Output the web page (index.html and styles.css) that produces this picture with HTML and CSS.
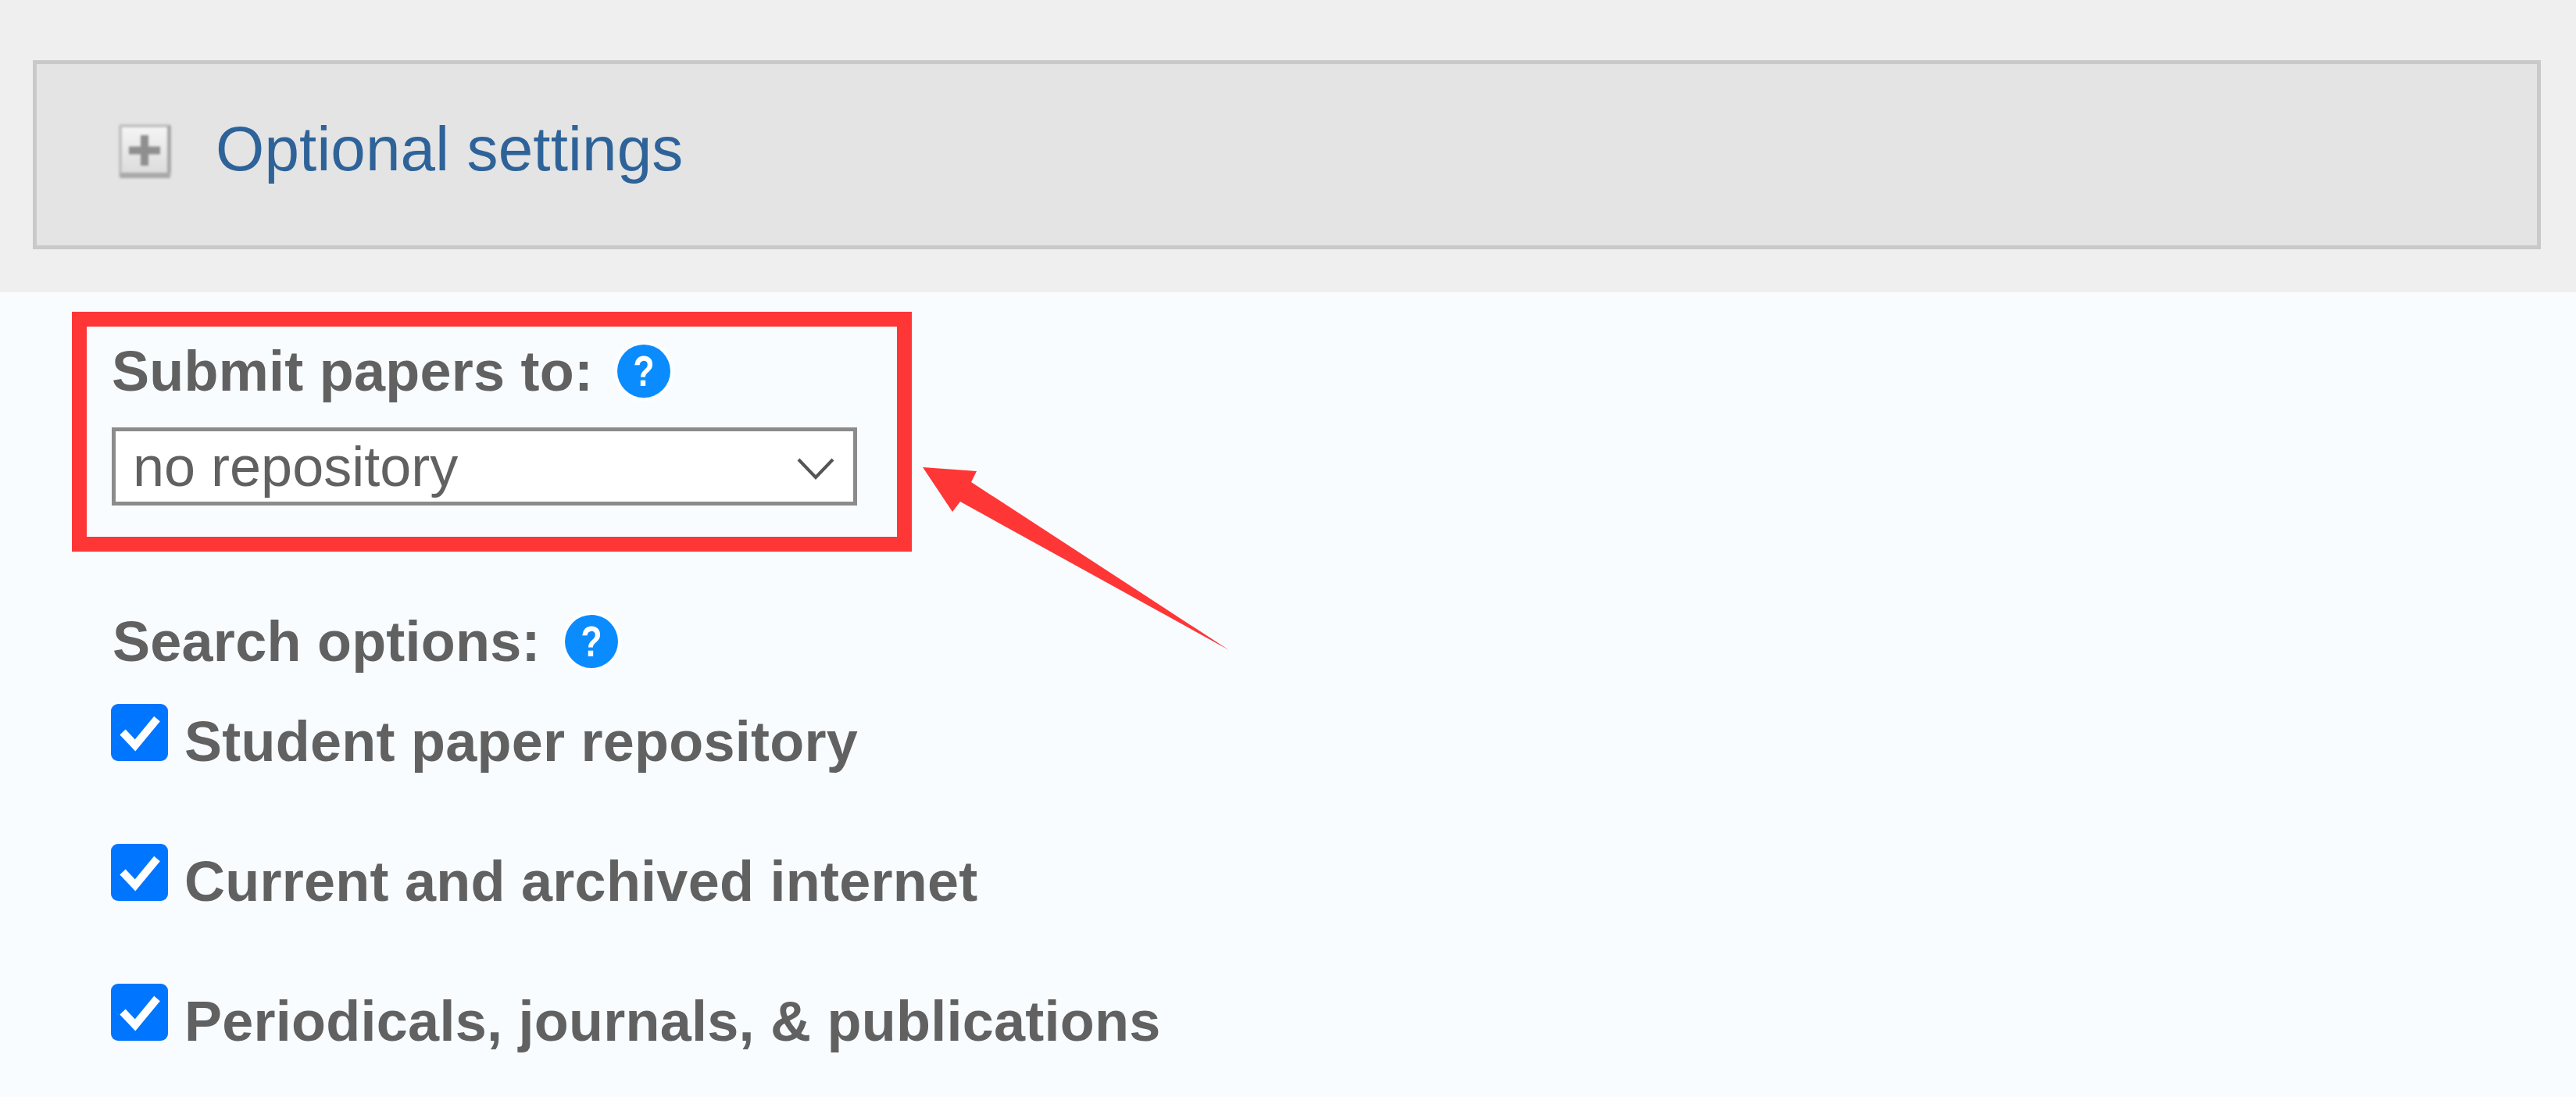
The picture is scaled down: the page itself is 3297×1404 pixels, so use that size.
FILE: index.html
```html
<!DOCTYPE html>
<html>
<head lang="en">
    <meta charset="UTF-8">
    <title>Optional settings</title>
    <link rel="stylesheet" href="styles.css">
</head>
<body>

<div class="options-bar">
    <div class="options-panel">
        <svg class="plus-icon" viewBox="0 0 67 69" width="67" height="69">
            <defs>
                <linearGradient id="plusFill" x1="0" y1="0" x2="0" y2="1">
                    <stop offset="0" stop-color="#f4f4f4"/>
                    <stop offset="1" stop-color="#dcdcdc"/>
                </linearGradient>
            </defs>
            <rect x="0" y="0" width="67" height="69" rx="3" fill="#c2c2c2"/>
            <path d="M62 2h5v60h-5zM2 62h63v7H2z" fill="#a9a9a9"/>
            <rect x="4" y="4" width="58" height="58" fill="url(#plusFill)"/>
            <path d="M28 14h10v14.5h15v10H38V53H28V38.5H13v-10h15z" fill="#8f8f8f"/>
        </svg>
        <span class="options-title">Optional settings</span>
    </div>
</div>

<div class="settings">
    <!-- highlighted field -->
    <div class="repo-box">
        <div class="field-label">
            <span>Submit papers to:</span>
            <span class="help"><b>?</b></span>
        </div>
        <div class="select-box">
            <span>no repository</span>
            <svg class="chevron" viewBox="0 0 48 28" width="48" height="28">
                <path d="M2 2l22 23L46 2" fill="none" stroke="#555" stroke-width="4"/>
            </svg>
        </div>
    </div>

    <div class="search-options">
        <div class="field-label">
            <span>Search options:</span>
            <span class="help"><b>?</b></span>
        </div>
        <ul class="check-list">
            <li><input type="checkbox" checked><span>Student paper repository</span></li>
            <li><input type="checkbox" checked><span>Current and archived internet</span></li>
            <li><input type="checkbox" checked><span>Periodicals, journals, &amp; publications</span></li>
        </ul>
    </div>
</div>

<!-- annotation arrow -->
<svg class="arrow" viewBox="0 0 410 250" width="410" height="250">
    <polygon points="11,8 80,13 73,27 403,242 59,52 49,65" fill="#ff3636"/>
</svg>

</body>
</html>
```

FILE: styles.css
```css
html, body, ul, li {
    padding: 0;
    margin: 0;
}

ul, li {
    list-style: none;
}

html {
    background: #f8fcff;
}

body {
    position: relative;
    min-height: 1404px;
    font-family: "Liberation Sans", Arial, sans-serif;
    color: #616161;
}

/* top bar */
.options-bar {
    height: 374px;
    padding: 77px 45px 0 42px;
    box-sizing: border-box;
    background: #efefef;
}

.options-panel {
    display: flex;
    align-items: center;
    gap: 57px;
    height: 242px;
    padding: 0 0 15px 105px;
    box-sizing: border-box;
    background: #e4e4e4;
    border: 5px solid #c9c9c9;
}

.plus-icon {
    margin-top: 6px;
    filter: blur(1.5px);
}

.options-title {
    font-size: 80px;
    line-height: 90px;
    letter-spacing: .15px;
    color: #2e6399;
}

/* form */
.repo-box {
    width: 1075px;
    height: 307px;
    margin: 25px 0 0 92px;
    padding: 15px 0 0 32px;
    box-sizing: border-box;
    border: 19px solid #ff3636;
}

.field-label {
    display: flex;
    align-items: center;
    gap: 31px;
    font-size: 72px;
    font-weight: 700;
    line-height: 84px;
    letter-spacing: .25px;
}

.help {
    width: 68px;
    height: 68px;
    border-radius: 50%;
    background: #0a8cff;
    box-shadow: 0 0 6px 4px #fff;
    color: #fff;
    font-size: 56px;
    line-height: 68px;
    text-align: center;
    filter: blur(.6px);
}

.help b {
    display: block;
    transform: scaleX(.8);
}

.select-box {
    display: flex;
    align-items: center;
    justify-content: space-between;
    width: 954px;
    height: 100px;
    padding: 0 24px 0 22px;
    margin-top: 30px;
    box-sizing: border-box;
    background: #fff;
    border: 5px solid #8b8b8b;
    font-size: 72px;
    line-height: 84px;
}

.chevron {
    margin-top: 5px;
}

.search-options {
    margin-top: 73px;
    padding-left: 142px;
}

.search-options .field-label {
    padding-left: 2px;
}

.check-list {
    margin-top: 38px;
    font-size: 72px;
    font-weight: 700;
    line-height: 84px;
    letter-spacing: .25px;
}

.check-list li {
    display: flex;
    align-items: flex-start;
    gap: 21px;
    height: 90px;
    margin-bottom: 89px;
}

/* drawn by hand, the native box has no round corners at this size */
.check-list input {
    appearance: none;
    width: 73px;
    height: 73px;
    margin: 0;
    border-radius: 9px;
    background: #0075ff url("data:image/svg+xml,%3Csvg xmlns='http://www.w3.org/2000/svg' viewBox='0 0 73 73'%3E%3Cpath d='M15 36l16 17 28-34' fill='none' stroke='%23fff' stroke-width='10'/%3E%3C/svg%3E");
}

.check-list span {
    margin-top: 6px;
}

.arrow {
    position: absolute;
    left: 1170px;
    top: 590px;
}
```
